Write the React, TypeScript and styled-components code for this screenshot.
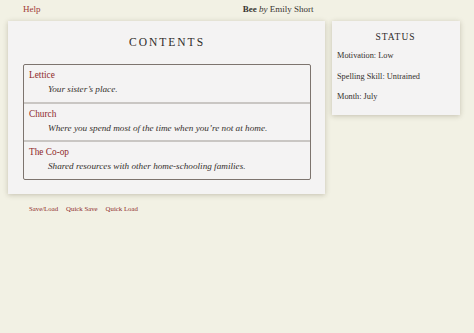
import React from "react";
import styled, { createGlobalStyle } from "styled-components";

const GlobalStyle = createGlobalStyle`
  html, body {
    margin: 0;
    padding: 0;
    background: #f2f1e4;
    font-family: "Liberation Serif", "Times New Roman", serif;
    color: #3a3633;
  }
`;

const Page = styled.div`
  padding: 0 8px;
`;

const TopBar = styled.div`
  height: 18px;
  display: flex;
  align-items: center;
  font-size: 9px;
`;

const HelpLink = styled.a`
  color: #a13a36;
  text-decoration: none;
  padding-left: 15px;
`;

const Title = styled.div`
  flex: 1;
  text-align: center;
  padding-left: 50px;
  color: #3a3633;
  b { font-weight: bold; }
  i { font-style: italic; }
`;

const Columns = styled.div`
  display: flex;
  align-items: flex-start;
  gap: 7px;
  margin-top: 3px;
`;

const Panel = styled.div<{ $width: number }>`
  width: ${(p) => p.$width}px;
  box-sizing: border-box;
  background: #f4f3f3;
  box-shadow: 0 1px 5px rgba(80, 70, 40, 0.28);
`;

const MainPanel = styled(Panel)`
  padding: 14px 14px 14px 15px;
`;

const StatusPanel = styled(Panel)`
  padding: 10px 6px 7.5px 5px;
`;

const Heading = styled.h1`
  margin: 0 0 15px;
  font-size: 11.5px;
  line-height: 14px;
  font-weight: normal;
  letter-spacing: 2px;
  text-align: center;
  color: #2f2b29;
`;

const StatusHeading = styled.h2`
  margin: 0 0 3px;
  font-size: 9.5px;
  line-height: 12px;
  font-weight: normal;
  letter-spacing: 1px;
  text-align: center;
  color: #2f2b29;
`;

const ChoiceBox = styled.div`
  border: 1px solid #7d746e;
  border-radius: 2px;
`;

const Choice = styled.div<{ $first?: boolean }>`
  border-top: ${(p) => (p.$first ? "none" : "2px solid #c9c6c3")};
  padding: 4px 0 5.5px 5px;
`;

const ChoiceLink = styled.a`
  display: block;
  font-size: 9.3px;
  line-height: 13px;
  color: #8e2a2a;
  text-decoration: none;
`;

const ChoiceDesc = styled.div`
  font-size: 9.2px;
  line-height: 14px;
  font-style: italic;
  padding-left: 19px;
  color: #34302d;
`;

const StatusLine = styled.div`
  font-size: 8.3px;
  line-height: 20.5px;
  color: #34302d;
`;

const Footer = styled.div`
  display: flex;
  gap: 8px;
  padding-left: 21px;
  margin-top: 10px;
  line-height: 10px;
`;

const FooterLink = styled.a`
  font-size: 6.8px;
  color: #8e2a2a;
  text-decoration: none;
`;

const choices = [
  { name: "Lettice", desc: "Your sister\u2019s place." },
  { name: "Church", desc: "Where you spend most of the time when you\u2019re not at home." },
  { name: "The Co-op", desc: "Shared resources with other home-schooling families." },
];

const status = ["Motivation: Low", "Spelling Skill: Untrained", "Month: July"];

export default function App() {
  return (
    <>
      <GlobalStyle />
      <Page>
        <TopBar>
          <HelpLink href="#">Help</HelpLink>
          <Title>
            <b>Bee</b> <i>by</i> Emily Short
          </Title>
        </TopBar>
        <Columns>
          <div>
            <MainPanel $width={317}>
              <Heading>CONTENTS</Heading>
              <ChoiceBox>
                {choices.map((c, i) => (
                  <Choice key={c.name} $first={i === 0}>
                    <ChoiceLink href="#">{c.name}</ChoiceLink>
                    <ChoiceDesc>{c.desc}</ChoiceDesc>
                  </Choice>
                ))}
              </ChoiceBox>
            </MainPanel>
            <Footer>
              <FooterLink href="#">Save/Load</FooterLink>
              <FooterLink href="#">Quick Save</FooterLink>
              <FooterLink href="#">Quick Load</FooterLink>
            </Footer>
          </div>
          <StatusPanel $width={128}>
            <StatusHeading>STATUS</StatusHeading>
            {status.map((s) => (
              <StatusLine key={s}>{s}</StatusLine>
            ))}
          </StatusPanel>
        </Columns>
      </Page>
    </>
  );
}
